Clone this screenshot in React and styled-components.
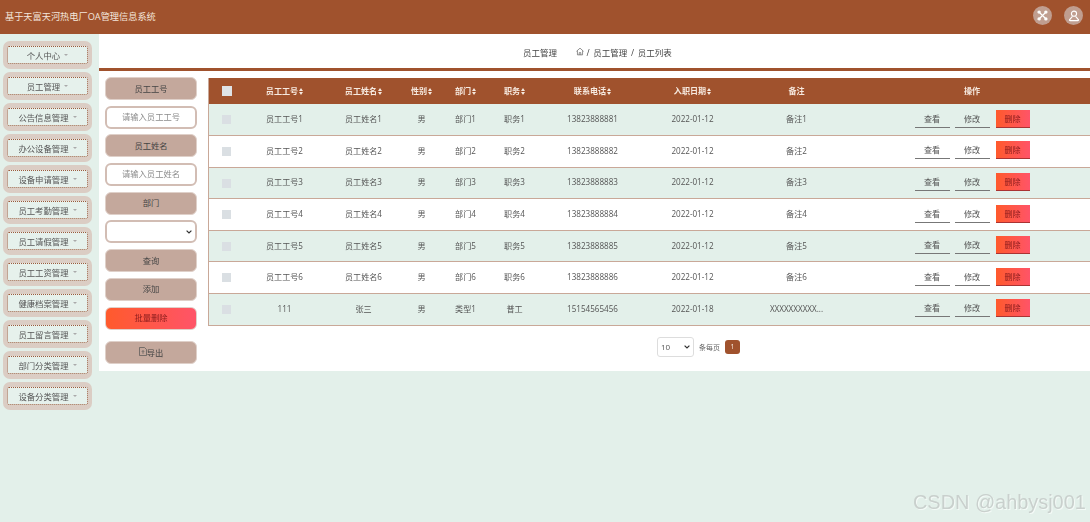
import React from "react"
import styled, { createGlobalStyle } from "styled-components"

const FONT = `"Open Sans","Noto Sans CJK SC",sans-serif`
const CHEVRON = `url("data:image/svg+xml,%3Csvg xmlns='http://www.w3.org/2000/svg' width='6' height='4' viewBox='0 0 6 4'%3E%3Cpath d='M.6.6L3 3l2.4-2.4' fill='none' stroke='%23333' stroke-width='1.2'/%3E%3C/svg%3E")`

const GlobalStyle = createGlobalStyle`
html,body{margin:0;padding:0;background:#e3f0ea;}
body{font-family:${FONT};width:1090px;height:522px;overflow:hidden;position:relative;}
#root{filter:blur(0.35px);}
*{box-sizing:border-box;}
`

const Header = styled.header`
height:34px;
background:#a0522d;
display:flex;
align-items:center;
padding:0 7px 3px 5px;
`
const Title = styled.div`
flex:1;
color:#f4e6dc;
font-size:9.2px;
`
const Round = styled.div`
width:19px;
height:19px;
border-radius:50%;
background:#c09e90;
display:flex;
align-items:center;
justify-content:center;
margin-left:${({$gap})=>$gap}px;
`
const Body = styled.div`
display:flex;
align-items:flex-start;
`
const Side = styled.nav`
width:99px;
flex:none;
padding:7px 0 0 3px;
display:flex;
flex-direction:column;
gap:3px;
`
const NavOuter = styled.div`
width:89px;
height:28px;
border-radius:7px;
background:#dbcdc4;
padding:5px 4px;
`
const NavInner = styled.div`
height:18px;
border:1px dotted #9c5a3c;
border-radius:2px;
background:#e6f1ec;
display:flex;
align-items:center;
justify-content:center;
font-size:8.4px;
color:#555;
gap:4px;
`
const Caret = styled.span`
width:0;
height:0;
border-left:2px solid transparent;
border-right:2px solid transparent;
border-top:2px solid #aaa;
`
const Main = styled.main`
flex:1;
height:337px;
background:#fff;
`
const Crumbs = styled.div`
height:37px;
border-bottom:3px solid #a0522d;
display:flex;
align-items:center;
padding:1px 0 0 424px;
font-size:8.5px;
color:#444;
`
const CrumbPath = styled.div`
display:flex;
align-items:center;
gap:2.5px;
margin-left:19px;
word-spacing:1.5px;
`
const Content = styled.div`
display:flex;
padding:6px 0 0 6px;
`
const SearchCol = styled.div`
width:92px;
flex:none;
display:flex;
flex-direction:column;
gap:5.7px;
`
const Block = styled.div`
height:23px;
flex:none;
border-radius:6px;
border:1px solid #dfd0c9;
background:${({$bg})=>$bg||"#c4a89c"};
color:${({$fg})=>$fg||"#444"};
display:flex;
align-items:center;
justify-content:center;
padding-bottom:2px;
font-size:8.3px;
margin-top:${({$top})=>$top||0}px;
`
const Input = styled.input`
height:23px;
flex:none;
width:100%;
border:2px solid #d2bdb4;
border-radius:6px;
background:#fff;
padding:0 0 2px;
text-align:center;
font:8.3px ${FONT};
outline:none;
&::placeholder{color:#8c8c8c;}
`
const Select = styled.select`
height:23px;
flex:none;
width:100%;
border:2px solid #d2bdb4;
border-radius:6px;
appearance:none;
background:#fff ${CHEVRON} no-repeat right 3px center;
font:8px ${FONT};
`
const TableWrap = styled.div`
flex:1;
margin-left:11px;
margin-top:1px;
`
const Table = styled.table`
width:881px;
table-layout:fixed;
border-collapse:collapse;
border-left:1px solid #c9a898;
font-size:8.1px;
color:#555;
`
const Th = styled.th`
height:26px;
padding:0 0 2px;
background:#a0522d;
color:#f6e9df;
font-size:8.1px;
font-weight:600;
text-align:center;
`
const Td = styled.td`
height:31.6px;
padding:0 0 2px;
text-align:center;
border-bottom:1px solid #c9a898;
background:${({$odd})=>$odd?"#e3f0ea":"#fff"};
`
const Check = styled.span`
display:inline-block;
vertical-align:middle;
width:${({$head})=>$head?10:9}px;
height:${({$head})=>$head?10:9}px;
background:${({$head})=>$head?"#dfe3e6":"#dadfe3"};
`
const SortMark = styled.svg`
width:4px;
height:7px;
margin-left:1px;
vertical-align:-1px;
`
const Actions = styled.div`
display:flex;
gap:5px;
padding-left:60px;
`
const Act = styled.div`
width:35px;
height:18px;
display:flex;
align-items:center;
justify-content:center;
color:#555;
border-bottom:1px solid #777;
`
const Del = styled(Act)`
width:34px;
background:linear-gradient(90deg,#ff5a2c,#ff5468);
color:#8a1c1c;
border-bottom:1px solid #a33;
margin-left:1px;
`
const Pager = styled.div`
display:flex;
align-items:center;
padding:11px 0 0 449px;
font-size:7px;
color:#666;
gap:5px;
`
const PageSize = styled.select`
width:37px;
height:20px;
border:1px solid #ddd;
border-radius:3px;
appearance:none;
background:#fff ${CHEVRON} no-repeat right 3px center;
color:#555;
padding-left:3px;
font:8px ${FONT};
`
const PageNum = styled.div`
width:15px;
height:14px;
border-radius:3px;
background:#a0522d;
color:#f6e9df;
display:flex;
align-items:center;
justify-content:center;
`
const Mark = styled.div`
position:absolute;
left:913px;
top:491px;
font:19.9px "Liberation Sans",sans-serif;
color:#c9d0cd;
text-shadow:1px 1px 0 #f4faf7;
`

const NAV=["个人中心","员工管理","公告信息管理","办公设备管理","设备申请管理","员工考勤管理","员工请假管理","员工工资管理","健康档案管理","员工留言管理","部门分类管理","设备分类管理"]
const COLS=[36,80,78,38,50,48,108,92,116,235]
const HEADS=["员工工号","员工姓名","性别","部门","职务","联系电话","入职日期"]
const ROWS=[1,2,3,4,5,6].map(n=>[`员工工号${n}`,`员工姓名${n}`,"男",`部门${n}`,`职务${n}`,`1382388888${n}`,"2022-01-12",`备注${n}`])
ROWS.push(["111","张三","男","类型1","普工","15154565456","2022-01-18","XXXXXXXXXX..."])

function ExpandIcon(){
    return(
        <svg width="11" height="11" viewBox="0 0 13 13" fill="none" stroke="#fff" strokeWidth="1.4">
            <path d="M3.5 3.5L9.5 9.5M9.5 3.5L3.5 9.5"/>
            <circle cx="2.5" cy="2.5" r="1.3" fill="#fff"/>
            <circle cx="10.5" cy="2.5" r="1.3" fill="#fff"/>
            <circle cx="2.5" cy="10.5" r="1.3" fill="#fff"/>
            <circle cx="10.5" cy="10.5" r="1.3" fill="#fff"/>
        </svg>
    )
}
function UserIcon(){
    return(
        <svg width="12" height="12" viewBox="0 0 13 13" fill="none" stroke="#fff" strokeWidth="1.2">
            <circle cx="6.5" cy="4" r="2.8"/>
            <path d="M4.8 6.8L1.6 10.6Q1.4 11.5 2.4 11.5H10.6Q11.6 11.5 11.4 10.6L8.2 6.8"/>
        </svg>
    )
}
function HomeIcon(){
    return(
        <svg width="8" height="9" viewBox="0 0 10 10" fill="none" stroke="#555" strokeWidth="0.8">
            <path d="M0.6 4.8L5 0.8L9.4 4.8M1.8 4V9.2H8.2V4M4 9.2V6.4H6V9.2"/>
        </svg>
    )
}
function ExportIcon(){
    return(
        <svg width="8" height="9" viewBox="0 0 8 9" fill="none" stroke="#555" strokeWidth="0.7">
            <path d="M0.5 0.5H5.5L7.5 2.5V8.5H0.5ZM4 6.8V3.6M2.8 4.8L4 3.6L5.2 4.8"/>
        </svg>
    )
}
function Sort(){
    return(
        <SortMark viewBox="0 0 4 7" fill="#f6e9df">
            <path d="M2 0L4 3H0ZM0 4H4L2 7Z"/>
        </SortMark>
    )
}

export default function App(){
    return(
        <>
            <GlobalStyle/>
            <Header>
                <Title>基于天富天河热电厂OA管理信息系统</Title>
                <Round><ExpandIcon/></Round>
                <Round $gap={12}><UserIcon/></Round>
            </Header>
            <Body>
                <Side>
                    {NAV.map(n=>(
                        <NavOuter key={n}>
                            <NavInner>{n}<Caret/></NavInner>
                        </NavOuter>
                    ))}
                </Side>
                <Main>
                    <Crumbs>
                        <span>员工管理</span>
                        <CrumbPath><HomeIcon/> / 员工管理 / 员工列表</CrumbPath>
                    </Crumbs>
                    <Content>
                        <SearchCol>
                            <Block>员工工号</Block>
                            <Input placeholder="请输入员工工号"/>
                            <Block>员工姓名</Block>
                            <Input placeholder="请输入员工姓名"/>
                            <Block>部门</Block>
                            <Select/>
                            <Block>查询</Block>
                            <Block>添加</Block>
                            <Block $bg="linear-gradient(90deg,#ff5a2c,#ff5468)" $fg="#8a1c1c">批量删除</Block>
                            <Block $top={6}><ExportIcon/>导出</Block>
                        </SearchCol>
                        <TableWrap>
                            <Table>
                                <colgroup>
                                    {COLS.map((w,i)=><col key={i} width={w}/>)}
                                </colgroup>
                                <thead>
                                    <tr>
                                        <Th><Check $head/></Th>
                                        {HEADS.map(h=><Th key={h}>{h}<Sort/></Th>)}
                                        <Th>备注</Th>
                                        <Th>操作</Th>
                                    </tr>
                                </thead>
                                <tbody>
                                    {ROWS.map((r,i)=>(
                                        <tr key={i}>
                                            <Td $odd={i%2==0}><Check/></Td>
                                            {r.map((c,j)=><Td key={j} $odd={i%2==0}>{c}</Td>)}
                                            <Td $odd={i%2==0}>
                                                <Actions>
                                                    <Act>查看</Act>
                                                    <Act>修改</Act>
                                                    <Del>删除</Del>
                                                </Actions>
                                            </Td>
                                        </tr>
                                    ))}
                                </tbody>
                            </Table>
                            <Pager>
                                <PageSize defaultValue="10"><option>10</option></PageSize>
                                <span>条每页</span>
                                <PageNum>1</PageNum>
                            </Pager>
                        </TableWrap>
                    </Content>
                </Main>
            </Body>
            <Mark>CSDN @ahbysj001</Mark>
        </>
    )
}
